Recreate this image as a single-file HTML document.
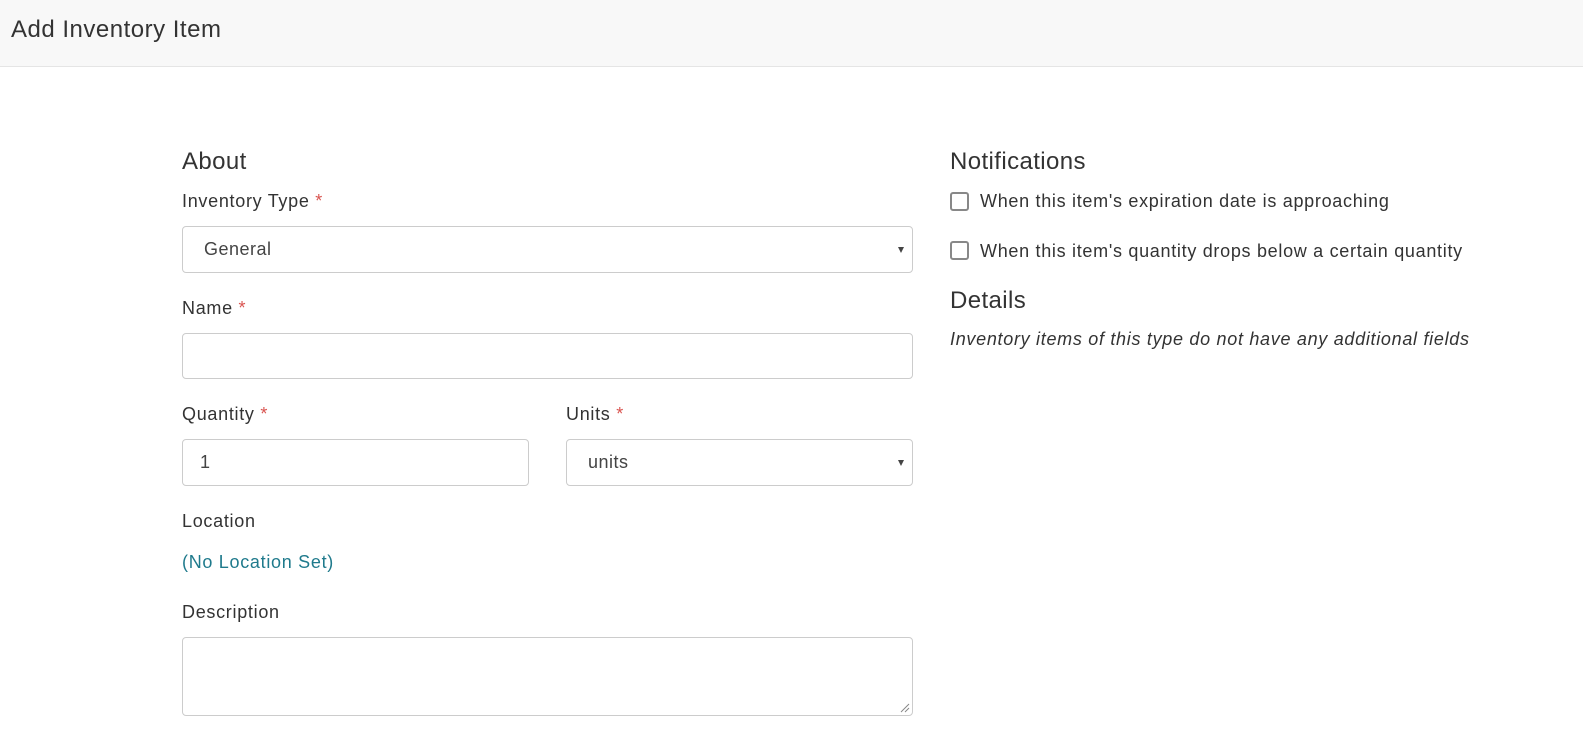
<!DOCTYPE html>
<html><head><style>
body{margin:0;width:1583px;height:740px;background:#fff;font-family:"Liberation Sans",sans-serif;color:#333;position:relative;overflow:hidden}
.hdr{position:absolute;left:0;top:0;width:1583px;height:66px;background:#f8f8f8;border-bottom:1px solid #e5e5e5}
.hdr span{position:absolute;left:11px;top:16px;font-size:24px;letter-spacing:0.5px;color:#333}
.a{position:absolute;white-space:nowrap}
.h{font-size:24px;letter-spacing:0.4px}
.l{font-size:18px;letter-spacing:0.7px}
.star{color:#d9534f}
.box{position:absolute;border:1px solid #ccc;border-radius:4px;background:#fff;box-sizing:border-box}
.box span{position:absolute;top:12px;font-size:18px;letter-spacing:0.5px;color:#444}
.arr{position:absolute;right:8px;top:20px;width:0;height:0;border-left:3px solid transparent;border-right:3px solid transparent;border-top:6px solid #444}
.cb{position:absolute;width:19px;height:19px;border:2px solid #888;border-radius:3px;box-sizing:border-box}
</style></head><body>
<div class="hdr"><span>Add Inventory Item</span></div>
<div class="a h" style="left:182px;top:148px">About</div>
<div class="a l" style="left:182px;top:191px">Inventory Type <span class="star">*</span></div>
<div class="box" style="left:182px;top:226px;width:731px;height:47px"><span style="left:21px">General</span><div class="arr"></div></div>
<div class="a l" style="left:182px;top:298px">Name <span class="star">*</span></div>
<div class="box" style="left:182px;top:333px;width:731px;height:46px"></div>
<div class="a l" style="left:182px;top:404px">Quantity <span class="star">*</span></div>
<div class="box" style="left:182px;top:439px;width:347px;height:47px"><span style="left:17px">1</span></div>
<div class="a l" style="left:566px;top:404px">Units <span class="star">*</span></div>
<div class="box" style="left:566px;top:439px;width:347px;height:47px"><span style="left:21px">units</span><div class="arr"></div></div>
<div class="a l" style="left:182px;top:511px">Location</div>
<div class="a l" style="left:182px;top:552px;color:#1f7a8c">(No Location Set)</div>
<div class="a l" style="left:182px;top:602px">Description</div>
<div class="box" style="left:182px;top:637px;width:731px;height:79px"><svg style="position:absolute;right:2px;bottom:2px" width="10" height="10"><path d="M1 9L9 1M5 9L9 5" stroke="#888" stroke-width="1"/></svg></div>
<div class="a h" style="left:950px;top:148px">Notifications</div>
<div class="cb" style="left:950px;top:192px"></div>
<div class="a l" style="left:980px;top:191px">When this item's expiration date is approaching</div>
<div class="cb" style="left:950px;top:241px"></div>
<div class="a l" style="left:980px;top:241px">When this item's quantity drops below a certain quantity</div>
<div class="a h" style="left:950px;top:287px">Details</div>
<div class="a l" style="left:950px;top:329px;font-style:italic">Inventory items of this type do not have any additional fields</div>
</body></html>
